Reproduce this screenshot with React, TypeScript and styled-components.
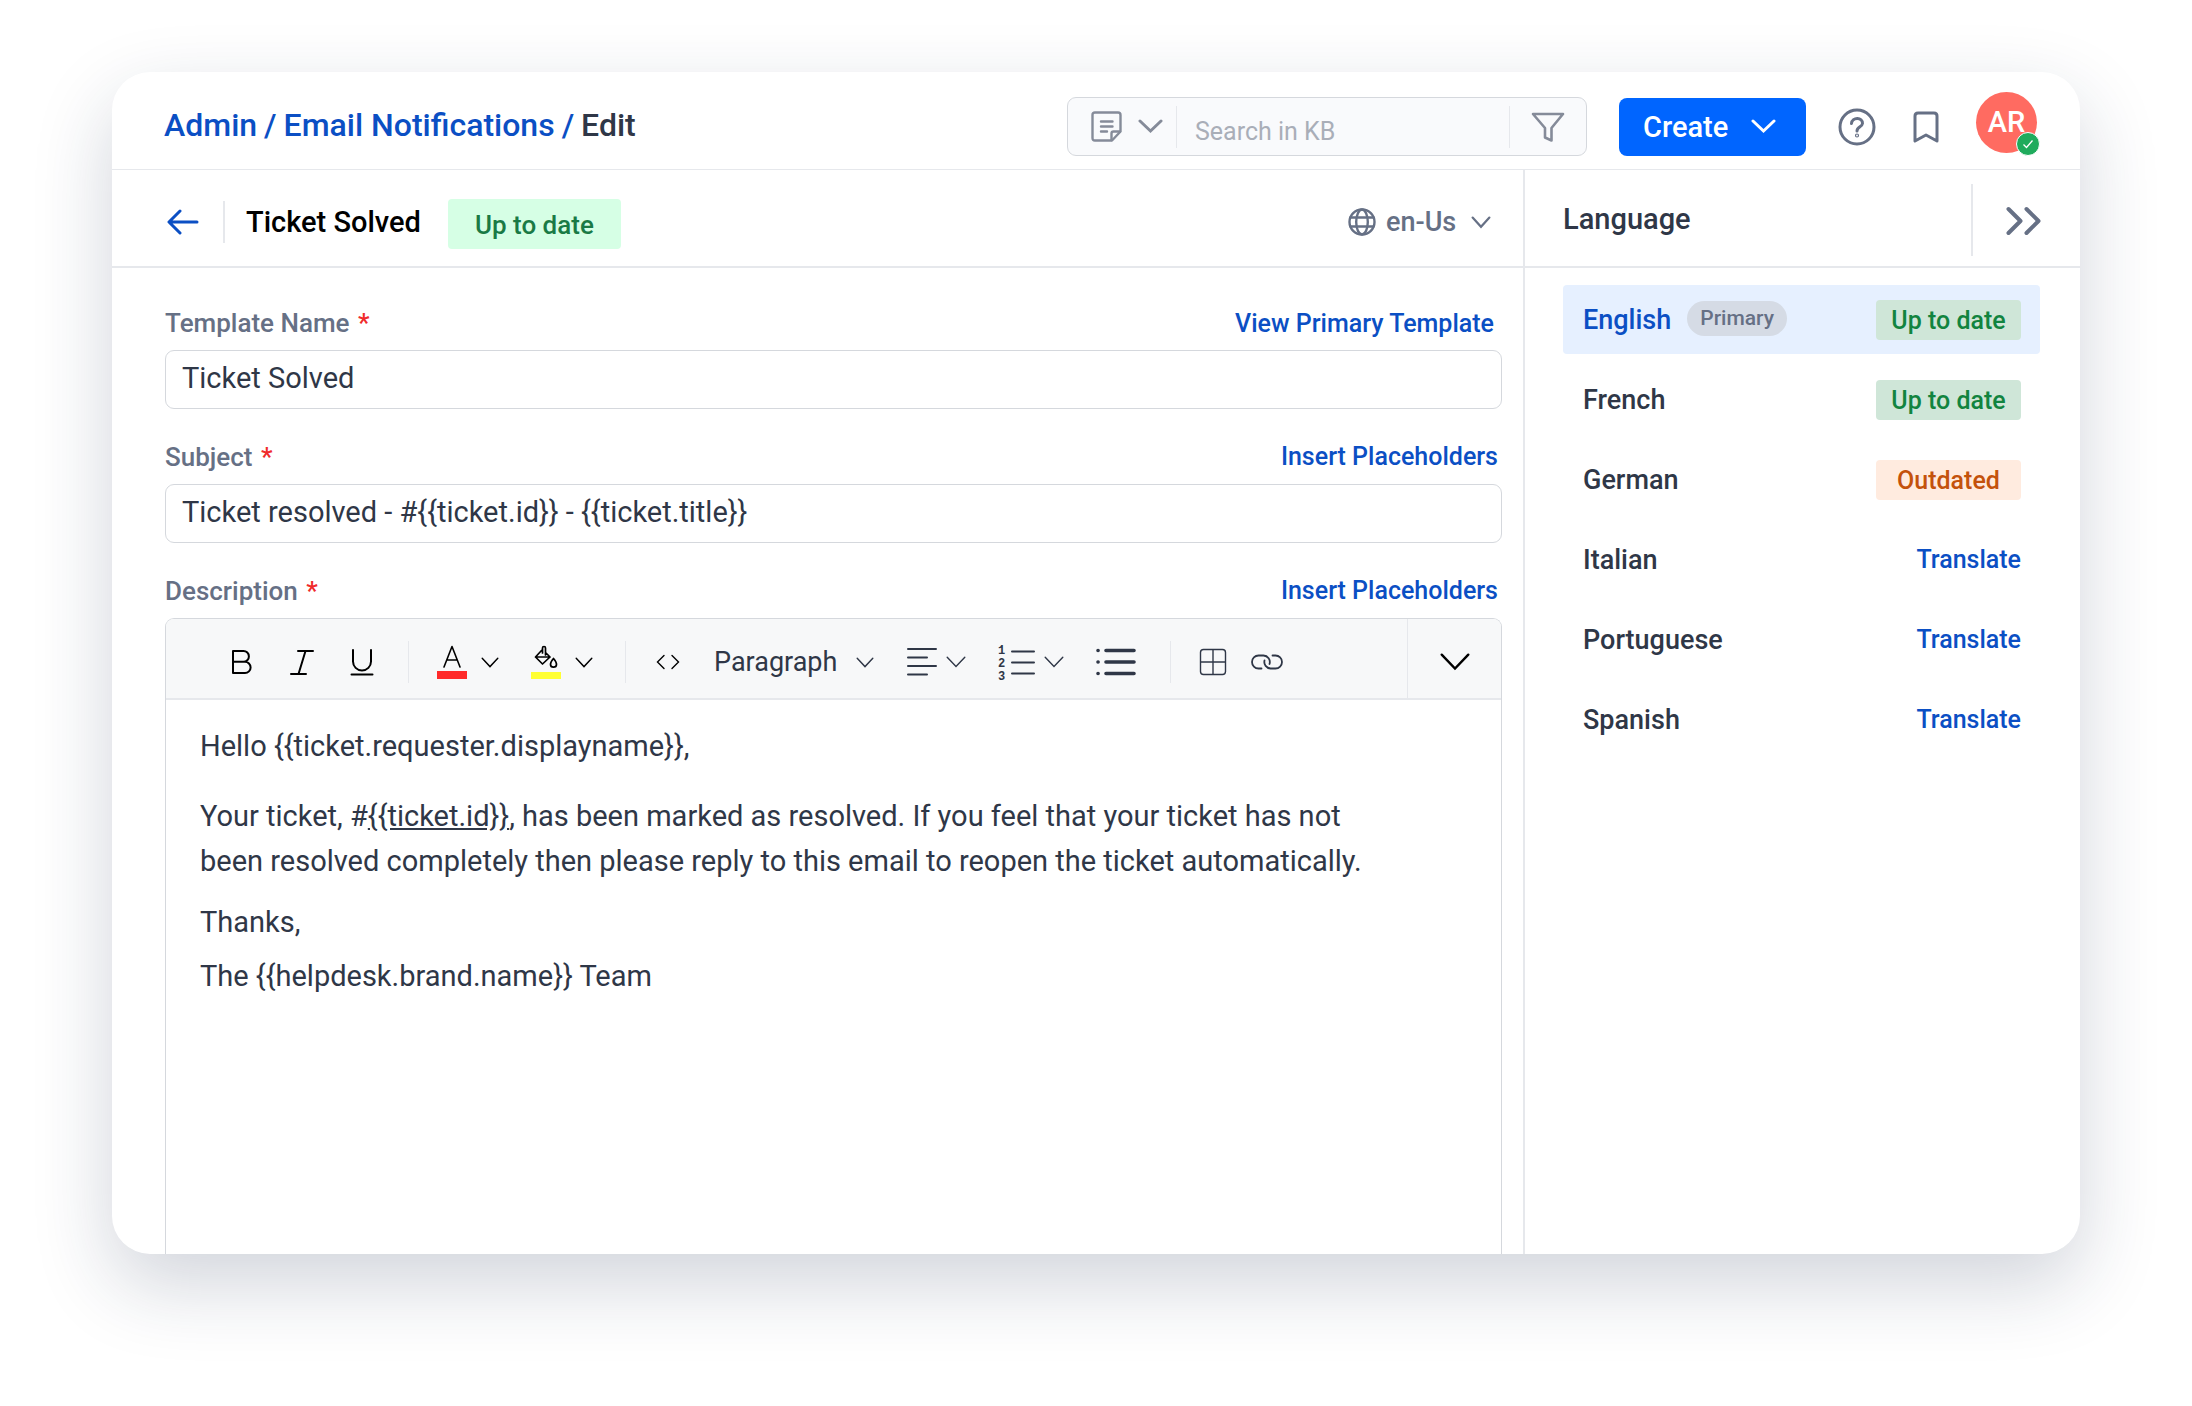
import React from 'react';
import styled, { createGlobalStyle, css } from 'styled-components';

const c = {
  link: '#0b4fc4',
  text: '#2f3747',
  muted: '#667085',
  line: '#e6e8ec',
  field: '#d5d8dd',
  primary: '#0065ff',
};

const GlobalStyle = createGlobalStyle`
  *, *::before, *::after { box-sizing: border-box; }
  body { margin: 0; background: #fff; color: ${c.text}; }
  body, button, input, select { font-family: Roboto, "Liberation Sans", sans-serif; }
  button, input, select { margin: 0; padding: 0; border: 0; background: none; color: inherit; }
  button, select { cursor: pointer; }
  p, h1, h2, ul, ol { margin: 0; padding: 0; font-weight: inherit; }
  ul, ol { list-style: none; }
  a { color: ${c.link}; text-decoration: none; }
  svg { display: block; flex: none; }
`;

const Page = styled.div`
  display: flex;
  min-height: 100vh;
  padding: 72px 112px 152px;
`;

const Card = styled.div`
  flex: 1;
  min-width: 0;
  display: flex;
  flex-direction: column;
  background: #fff;
  border-radius: 38px;
  overflow: hidden;
  box-shadow: 0 30px 80px rgba(24, 39, 75, 0.2);
`;

const Header = styled.header`
  display: flex;
  align-items: center;
  gap: 32px;
  height: 98px;
  padding: 12px 43px 0 52px;
  border-bottom: 1px solid ${c.line};
`;

const Breadcrumb = styled.nav`
  flex: 1;
  padding-bottom: 4px;
  ol { display: flex; gap: 7px; }
  li { display: flex; gap: 7px; font-size: 32px; line-height: 40px; font-weight: 500; }
  li + li::before { content: '/'; color: ${c.link}; }
`;

const Search = styled.form`
  display: flex;
  align-items: center;
  width: 520px;
  height: 59px;
  border: 1px solid ${c.field};
  border-radius: 9px;
  background: #f9fafc;
  color: #858b99;
`;

const ScopeButton = styled.button`
  display: flex;
  align-items: center;
  gap: 16px;
  height: 42px;
  padding: 0 13px 0 23px;
  border-right: 1px solid ${c.line};
`;

const SearchInput = styled.input`
  flex: 1;
  min-width: 0;
  height: 100%;
  padding: 10px 18px 0;
  font-size: 25px;
  outline: none;
  &::placeholder { color: #a9aeb8; opacity: 1; }
`;

const FilterButton = styled.button`
  display: flex;
  align-items: center;
  height: 42px;
  padding: 0 21px;
  border-left: 1px solid ${c.line};
`;

const CreateButton = styled.button`
  display: flex;
  align-items: center;
  justify-content: space-between;
  width: 187px;
  height: 58px;
  padding: 0 30px 0 24px;
  border-radius: 8px;
  background: ${c.primary};
  color: #fff;
  font-size: 29px;
  font-weight: 500;
`;

const IconButton = styled.button<{ $w: number }>`
  display: flex;
  align-items: center;
  justify-content: center;
  width: ${p => p.$w}px;
  height: 40px;
  color: ${c.muted};
`;

const Avatar = styled.button`
  position: relative;
  width: 61px;
  height: 61px;
  margin-bottom: 8px;
  border-radius: 50%;
  background: #ff6b61;
  color: #fff;
  font-size: 29px;
  font-weight: 500;
  line-height: 57px;
`;

const Status = styled.span`
  position: absolute;
  right: -3px;
  bottom: -3px;
  display: flex;
  align-items: center;
  justify-content: center;
  width: 24px;
  height: 24px;
  border: 1px solid #fff;
  border-radius: 50%;
  background: #1fab5c;
`;

const Body = styled.div`
  flex: 1;
  display: grid;
  grid-template-columns: minmax(0, 1fr) 557px;
`;

const Main = styled.main`
  display: flex;
  flex-direction: column;
`;

const Aside = styled.aside`
  border-left: 2px solid ${c.line};
`;

const SubHeader = styled.div`
  display: flex;
  align-items: center;
  height: 98px;
  padding: 8px 32px 0 53px;
  border-bottom: 2px solid ${c.line};
`;

const BackButton = styled.button`
  display: flex;
  align-items: center;
  height: 42px;
  padding: 0 24px 0 2px;
  border-right: 2px solid ${c.line};
  color: ${c.link};
`;

const Title = styled.h1`
  margin: 0 27px 0 21px;
  font-size: 29px;
  line-height: 36px;
  font-weight: 500;
  color: #000;
`;

type Tone = 'fresh' | 'ok' | 'warn';
const tones = {
  fresh: css`background: #d6ffe5; color: #1a7a45;`,
  ok: css`background: #cfe6d8; color: #12843f;`,
  warn: css`background: #ffebdf; color: #c4520c;`,
};

const Badge = styled.span<{ $tone: Tone; $large?: boolean }>`
  display: flex;
  align-items: center;
  justify-content: center;
  width: ${p => (p.$large ? 173 : 145)}px;
  height: ${p => (p.$large ? 50 : 40)}px;
  margin-top: ${p => (p.$large ? 4 : 0)}px;
  padding-top: 2px;
  border-radius: 4px;
  font-size: ${p => (p.$large ? 26 : 25)}px;
  font-weight: 500;
  ${p => tones[p.$tone]}
`;

const LocalePicker = styled.label`
  display: flex;
  align-items: center;
  gap: 10px;
  margin-left: auto;
  color: ${c.muted};
`;

const Picker = styled.select<{ $w: number; $weight?: number }>`
  appearance: none;
  width: ${p => p.$w}px;
  height: 40px;
  font-size: 27px;
  line-height: 40px;
  font-weight: ${p => p.$weight ?? 400};
  outline: none;
`;

const Form = styled.form`
  flex: 1;
  display: flex;
  flex-direction: column;
  gap: 32px;
  padding: 39px 21px 0 53px;
`;

const Field = styled.div<{ $grow?: boolean }>`
  display: flex;
  flex-direction: column;
  gap: 11px;
  ${p => p.$grow && css`flex: 1;`}
`;

const FieldHead = styled.div`
  display: flex;
  align-items: center;
  justify-content: space-between;
  height: 32px;
`;

const Label = styled.label`
  font-size: 26px;
  line-height: 32px;
  font-weight: 500;
  color: ${c.muted};
  span { margin-left: 2px; color: #f02b2b; }
`;

const action = css`
  font-size: 25px;
  line-height: 32px;
  font-weight: 500;
  color: ${c.link};
`;
const TemplateLink = styled.a`${action} padding: 2px 8px 0 0;`;
const PlaceholderButton = styled.button`${action} padding-right: 4px;`;
const TranslateLink = styled.a`${action}`;

const TextInput = styled.input`
  width: 100%;
  height: 59px;
  padding: 0 16px 3px;
  border: 1px solid ${c.field};
  border-radius: 9px;
  font-size: 29px;
  outline: none;
`;

const Editor = styled.div`
  flex: 1;
  display: flex;
  flex-direction: column;
  border: 1px solid ${c.field};
  border-bottom: 0;
  border-radius: 9px 9px 0 0;
  overflow: hidden;
`;

const Toolbar = styled.div`
  display: flex;
  height: 81px;
  border-bottom: 2px solid ${c.line};
  background: #f7f8f9;
`;

const Tools = styled.div`
  flex: 1;
  display: flex;
  align-items: center;
  padding: 7px 0 0 34px;
`;

const ToolGroup = styled.div<{ $gap?: number; $last?: boolean }>`
  display: flex;
  align-items: center;
  gap: ${p => p.$gap ?? 32}px;
  height: 42px;
  padding: 0 32px 0 28px;
  border-right: ${p => (p.$last ? 0 : 1)}px solid ${c.line};
`;

const Tool = styled.button<{ $w: number; $ink?: string }>`
  display: flex;
  align-items: center;
  justify-content: space-between;
  width: ${p => p.$w}px;
  height: 40px;
  color: ${p => p.$ink ?? '#000'};
`;

const FormatPicker = styled.label`
  display: flex;
  align-items: center;
  color: ${c.text};
`;

const MoreButton = styled.button`
  display: flex;
  align-items: center;
  justify-content: center;
  width: 94px;
  padding-top: 6px;
  border-left: 1px solid ${c.line};
  color: #000;
`;

const Content = styled.div`
  flex: 1;
  padding: 24px 120px 24px 34px;
  font-size: 29px;
  line-height: 45px;
  outline: none;
`;

const Paragraph = styled.p<{ $after?: number }>`
  margin-bottom: ${p => p.$after ?? 0}px;
`;

const PanelHead = styled.div`
  display: flex;
  align-items: center;
  justify-content: space-between;
  height: 98px;
  padding: 3px 32px 0 38px;
  border-bottom: 2px solid ${c.line};
  h2 { font-size: 29px; line-height: 36px; font-weight: 500; padding-bottom: 2px; }
`;

const CollapseButton = styled.button`
  display: flex;
  align-items: center;
  height: 72px;
  padding: 2px 6px 0 33px;
  border-left: 2px solid ${c.line};
  color: ${c.muted};
`;

const Languages = styled.ul`
  display: flex;
  flex-direction: column;
  gap: 11px;
  padding: 17px 40px 0 38px;
`;

const Language = styled.li<{ $active?: boolean }>`
  display: flex;
  align-items: center;
  gap: 16px;
  height: 69px;
  padding: 0 19px 0 20px;
  border-radius: 4px;
  font-size: 27px;
  font-weight: 500;
  ${p => p.$active && css`background: #e6f0ff; color: ${c.link};`}
`;

const Pill = styled.span`
  height: 35px;
  padding: 0 13px;
  margin-bottom: 3px;
  border-radius: 18px;
  background: #d5dbe5;
  color: ${c.muted};
  font-size: 21px;
  line-height: 35px;
`;

const End = styled.span`
  margin-left: auto;
`;

const Stroke = ({ w, h, sw = 2, children, join = 'round' }: any) => (
  <svg width={w} height={h} viewBox={`0 0 ${w} ${h}`} fill="none" stroke="currentColor" strokeWidth={sw} strokeLinecap="round" strokeLinejoin={join} aria-hidden="true">
    {children}
  </svg>
);

const Chevron = ({ w, h, sw = 2 }: { w: number; h: number; sw?: number }) => (
  <Stroke w={w} h={h} sw={sw} join="miter"><path d={`M${sw / 2 + 0.5} ${sw / 2 + 0.5}L${w / 2} ${h - sw}L${w - sw / 2 - 0.5} ${sw / 2 + 0.5}`} /></Stroke>
);

const languages: { name: string; primary?: boolean; tone?: Tone; status?: string }[] = [
  { name: 'English', primary: true, tone: 'ok', status: 'Up to date' },
  { name: 'French', tone: 'ok', status: 'Up to date' },
  { name: 'German', tone: 'warn', status: 'Outdated' },
  { name: 'Italian' },
  { name: 'Portuguese' },
  { name: 'Spanish' },
];

const TopBar = () => (
  <Header>
    <Breadcrumb aria-label="Breadcrumb">
      <ol>
        <li><a href="#admin">Admin</a></li>
        <li><a href="#email">Email Notifications</a></li>
        <li aria-current="page">Edit</li>
      </ol>
    </Breadcrumb>
    <Search role="search">
      <ScopeButton type="button" aria-label="Search scope">
        <Stroke w={31} h={31} sw={2.4}>
          <path d="M4 1.500H27Q29.500 1.500 29.500 4V20.500L21 29.500H4Q1.500 29.500 1.500 27V4Q1.500 1.500 4 1.500Z" />
          <path d="M20.500 29V22.500Q20.500 20.500 22.500 20.500H29M10 10.500H21.500M10 15.500H21.500M10 20.500H16" />
        </Stroke>
        <Chevron w={25} h={15} sw={3} />
      </ScopeButton>
      <SearchInput type="text" placeholder="Search in KB" aria-label="Search in KB" />
      <FilterButton type="button" aria-label="Filter">
        <Stroke w={34} h={30} sw={2.6}><path d="M2 2H32L20.500 16V28.500L14 25.500V16Z" /></Stroke>
      </FilterButton>
    </Search>
    <CreateButton type="button">Create<Chevron w={25} h={15} sw={3} /></CreateButton>
    <IconButton type="button" $w={38} aria-label="Help">
      <Stroke w={38} h={38} sw={3}>
        <circle cx="19" cy="19" r="17" />
        <path d="M13.500 15.500C14 8.500 25 9 24.500 15.500C24.200 19 19 18.500 19 23" />
        <circle cx="19" cy="27.500" r="0.600" />
      </Stroke>
    </IconButton>
    <IconButton type="button" $w={36} aria-label="Bookmarks">
      <Stroke w={26} h={32} sw={3}><path d="M5 2H21Q24 2 24 5V30L13 24L2 30V5Q2 2 5 2Z" /></Stroke>
    </IconButton>
    <Avatar type="button">
      AR
      <Status><svg width="12" height="10" viewBox="0 0 12 10" fill="none" stroke="#fff" strokeWidth="1.300"><path d="M1.500 5.500L4.500 8.500L10.500 1.500" /></svg></Status>
    </Avatar>
  </Header>
);

const EditorToolbar = () => (
  <Toolbar role="toolbar" aria-label="Formatting">
    <Tools>
      <ToolGroup>
        <Tool type="button" $w={28} aria-label="Bold">
          <Stroke w={28} h={28}><path d="M5 3H15.500A5.400 5.400 0 0 1 15.500 13.800H5M15.500 13.800H17A5.600 5.600 0 0 1 17 25H5V3" /></Stroke>
        </Tool>
        <Tool type="button" $w={28} aria-label="Italic">
          <Stroke w={28} h={28}><path d="M10 3H25M3 26H18M17.500 3L10.500 26" /></Stroke>
        </Tool>
        <Tool type="button" $w={28} aria-label="Underline">
          <Stroke w={28} h={28}><path d="M5 2V13.500A9 9 0 0 0 23 13.500V2M3.500 26.500H24.500" /></Stroke>
        </Tool>
      </ToolGroup>
      <ToolGroup>
        <Tool type="button" $w={62} aria-label="Text colour">
          <svg width="30" height="34" viewBox="0 0 30 34" fill="none" stroke="currentColor" strokeWidth="1.600" strokeLinecap="round" strokeLinejoin="round"><path d="M7 22L15 1.500L23 22M10 15H20" /><path d="M0 26H30V34H0Z" fill="#ff2a2a" stroke="none" /></svg>
          <Chevron w={18} h={11} sw={1.4} />
        </Tool>
        <Tool type="button" $w={62} aria-label="Highlight colour">
          <svg width="30" height="34" viewBox="0 0 30 34" fill="none" stroke="currentColor" strokeWidth="1.700" strokeLinecap="round" strokeLinejoin="round">
            <path d="M11.500 8V3Q11.500 1.500 13 1.500Q14.500 1.500 14.500 3V10M10.500 5.500L4.500 12L11.500 19L19 12L14.500 7.500M4.500 12H19" />
            <path d="M22.500 13.500Q19.500 17 19.500 19.200A3 3 0 0 0 25.500 19.200Q25.500 17 22.500 13.500Z" />
            <path d="M0 27H30V34H0Z" fill="#ffff33" stroke="none" />
          </svg>
          <Chevron w={18} h={11} sw={1.4} />
        </Tool>
      </ToolGroup>
      <ToolGroup>
        <Tool type="button" $w={28} aria-label="Code view">
          <Stroke w={28} h={16} sw={1.4} join="miter"><path d="M10 1.500L3.500 8L10 14.500M18 1.500L24.500 8L18 14.500" /></Stroke>
        </Tool>
        <FormatPicker>
          <Picker $w={142} aria-label="Block format" defaultValue="Paragraph"><option>Paragraph</option><option>Heading</option></Picker>
          <Chevron w={18} h={11} sw={1.4} />
        </FormatPicker>
        <Tool type="button" $w={60} $ink={c.text} aria-label="Align">
          <Stroke w={32} h={30}><path d="M2 2H30M2 10.500H21M2 19H30M2 27.500H21" /></Stroke>
          <Chevron w={20} h={12} sw={1.4} />
        </Tool>
        <Tool type="button" $w={66} $ink={c.text} aria-label="Numbered list">
          <svg width="38" height="43" viewBox="0 -2 38 43" fill="none" stroke="currentColor" strokeWidth="2" strokeLinecap="round">
            <g fill="currentColor" stroke="none" fontFamily="Liberation Mono, monospace" fontWeight="700" fontSize="12"><text x="0" y="11">1</text><text x="0" y="24">2</text><text x="0" y="37">3</text></g>
            <path d="M14 8.500H36M14 19.500H36M14 30.500H36" />
          </svg>
          <Chevron w={20} h={12} sw={1.4} />
        </Tool>
        <Tool type="button" $w={42} $ink={c.text} aria-label="Bulleted list">
          <Stroke w={42} h={30} sw={3.6}><path d="M10 3.500H38M10 15H38M10 26.500H38M2 3.500H2.100M2 15H2.100M2 26.500H2.100" /></Stroke>
        </Tool>
      </ToolGroup>
      <ToolGroup $gap={24} $last>
        <Tool type="button" $w={28} $ink={c.text} aria-label="Insert table">
          <Stroke w={28} h={28} sw={1.4}><rect x="1.500" y="1.500" width="25" height="25" rx="3" /><path d="M14 2V26M2 14H26" /></Stroke>
        </Tool>
        <Tool type="button" $w={32} $ink={c.text} aria-label="Insert link">
          <Stroke w={32} h={16} sw={1.8}><path d="M10.500 14.500H7.500A6.500 6.500 0 0 1 7.500 1.500H12.500A6.500 6.500 0 0 1 18.500 10M13.500 6.500A6.500 6.500 0 0 0 19.500 14.500H24.500A6.500 6.500 0 0 0 24.500 1.500H21.500" /></Stroke>
        </Tool>
      </ToolGroup>
    </Tools>
    <MoreButton type="button" aria-label="More tools"><Chevron w={30} h={18} sw={2.4} /></MoreButton>
  </Toolbar>
);

const LanguagePanel = () => (
  <Aside aria-label="Languages">
    <PanelHead>
      <h2>Language</h2>
      <CollapseButton type="button" aria-label="Collapse panel">
        <Stroke w={36} h={30} sw={4}><path d="M2.500 3L14.500 15L2.500 27M20.500 3L32.500 15L20.500 27" /></Stroke>
      </CollapseButton>
    </PanelHead>
    <Languages>
      {languages.map(l => (
        <Language key={l.name} $active={l.primary}>
          {l.name}
          {l.primary && <Pill>Primary</Pill>}
          <End>{l.status ? <Badge $tone={l.tone!}>{l.status}</Badge> : <TranslateLink href={`#${l.name}`}>Translate</TranslateLink>}</End>
        </Language>
      ))}
    </Languages>
  </Aside>
);

const Star = () => <span>*</span>;

export default function App() {
  return (
    <>
      <GlobalStyle />
      <Page>
        <Card>
          <TopBar />
          <Body>
            <Main>
              <SubHeader>
                <BackButton type="button" aria-label="Back">
                  <Stroke w={32} h={26} sw={3}><path d="M13 2L2 13L13 24M2.500 13H30" /></Stroke>
                </BackButton>
                <Title>Ticket Solved</Title>
                <Badge $tone="fresh" $large>Up to date</Badge>
                <LocalePicker>
                  <Stroke w={28} h={28} sw={2.4}><circle cx="14" cy="14" r="12.500" /><ellipse cx="14" cy="14" rx="5.800" ry="12.500" /><path d="M2.500 9.500H25.500M2.500 18.500H25.500" /></Stroke>
                  <Picker $w={75} $weight={500} aria-label="Locale" defaultValue="en-Us"><option>en-Us</option><option>fr-Fr</option></Picker>
                  <Chevron w={20} h={13} sw={2.2} />
                </LocalePicker>
              </SubHeader>
              <Form>
                <Field>
                  <FieldHead>
                    <Label htmlFor="name">Template Name <Star /></Label>
                    <TemplateLink href="#primary">View Primary Template</TemplateLink>
                  </FieldHead>
                  <TextInput id="name" type="text" defaultValue="Ticket Solved" />
                </Field>
                <Field>
                  <FieldHead>
                    <Label htmlFor="subject">Subject <Star /></Label>
                    <PlaceholderButton type="button">Insert Placeholders</PlaceholderButton>
                  </FieldHead>
                  <TextInput id="subject" type="text" defaultValue="Ticket resolved - #{{ticket.id}} - {{ticket.title}}" />
                </Field>
                <Field $grow>
                  <FieldHead>
                    <Label as="span" id="description-label">Description <Star /></Label>
                    <PlaceholderButton type="button">Insert Placeholders</PlaceholderButton>
                  </FieldHead>
                  <Editor>
                    <EditorToolbar />
                    <Content role="textbox" aria-multiline="true" aria-labelledby="description-label" contentEditable suppressContentEditableWarning spellCheck={false}>
                      <Paragraph $after={25}>{'Hello {{ticket.requester.displayname}},'}</Paragraph>
                      <Paragraph $after={16}>
                        Your ticket, #<u>{'{{ticket.id}}'}</u>, has been marked as resolved. If you feel that your ticket has not been resolved completely then please reply to this email to reopen the ticket automatically.
                      </Paragraph>
                      <Paragraph $after={9}>Thanks,</Paragraph>
                      <Paragraph>{'The {{helpdesk.brand.name}} Team'}</Paragraph>
                    </Content>
                  </Editor>
                </Field>
              </Form>
            </Main>
            <LanguagePanel />
          </Body>
        </Card>
      </Page>
    </>
  );
}
